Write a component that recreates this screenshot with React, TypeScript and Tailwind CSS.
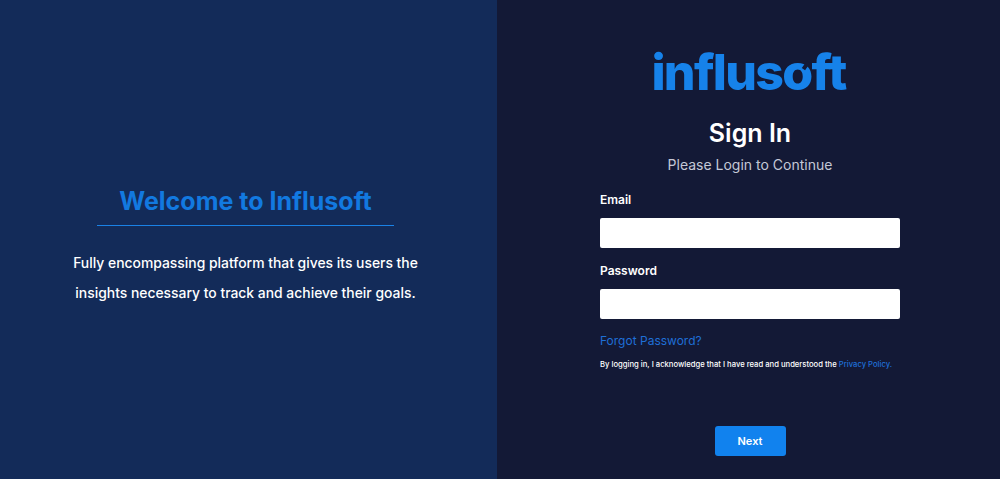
import React from "react";

const font = { fontFamily: "Inter, 'Noto Sans', sans-serif" };

const Field = ({ label }: { label: string }) => (
  <div className="flex flex-col">
    <label className="text-[12px] leading-[16px] font-semibold text-white">{label}</label>
    <input className="mt-[10px] h-[30px] w-[300px] rounded-[2px] bg-white outline-none" />
  </div>
);

const App = () => {
  return (
    <div style={font} className="flex h-[479px] w-[1000px] overflow-hidden font-['Inter',sans-serif]">
      <div className="flex w-[497px] flex-col items-center bg-[#132b59] pt-[184px] pr-[6px]">
        <h2 className="text-[25px] leading-[34px] font-bold text-[#1279e0]">Welcome to Influsoft</h2>
        <div className="mt-[7px] h-[1px] w-[297px] bg-[#1a82e6]" />
        <p className="mt-[22px] text-center text-[13.9px] leading-[30px] font-medium text-white">
          Fully encompassing platform that gives its users the
          <br />
          insights necessary to track and achieve their goals.
        </p>
      </div>
      <div className="flex flex-1 flex-col items-center bg-[#131936] pt-[41px] pl-[3px]">
        <div className="-ml-[3px] h-[62px] text-[50px] leading-[62px] font-extrabold tracking-[-1.7px] text-[#1682ea]">
          influs
          <span className="relative">
            o
            <span className="absolute top-[19px] right-[3px] h-[9px] w-[4px] rotate-[35deg] bg-[#131936]" />
          </span>
          ft
        </div>
        <h1 className="mt-[14px] text-[25px] leading-[32px] font-semibold text-white">Sign In</h1>
        <p className="mt-[5px] text-[14px] leading-[22px] text-[#c4c8d6]">Please Login to Continue</p>
        <div className="mt-[16px] flex w-[300px] flex-col gap-[15px]">
          <Field label="Email" />
          <Field label="Password" />
        </div>
        <div className="mt-[14px] w-[300px]">
          <a className="block text-[12px] leading-[16px] text-[#1f6fd6]">Forgot Password?</a>
          <p className="mt-[10px] text-[7.66px] leading-[12px] font-medium whitespace-nowrap text-white">
            By logging in, I acknowledge that I have read and understood the{" "}
            <a className="text-[#1f6fd6]">Privacy Policy.</a>
          </p>
        </div>
        <button className="mt-[55px] h-[30px] w-[71px] rounded-[3px] bg-[#1182ee] text-[11px] font-semibold text-white">
          Next
        </button>
      </div>
    </div>
  );
};

export default App;
